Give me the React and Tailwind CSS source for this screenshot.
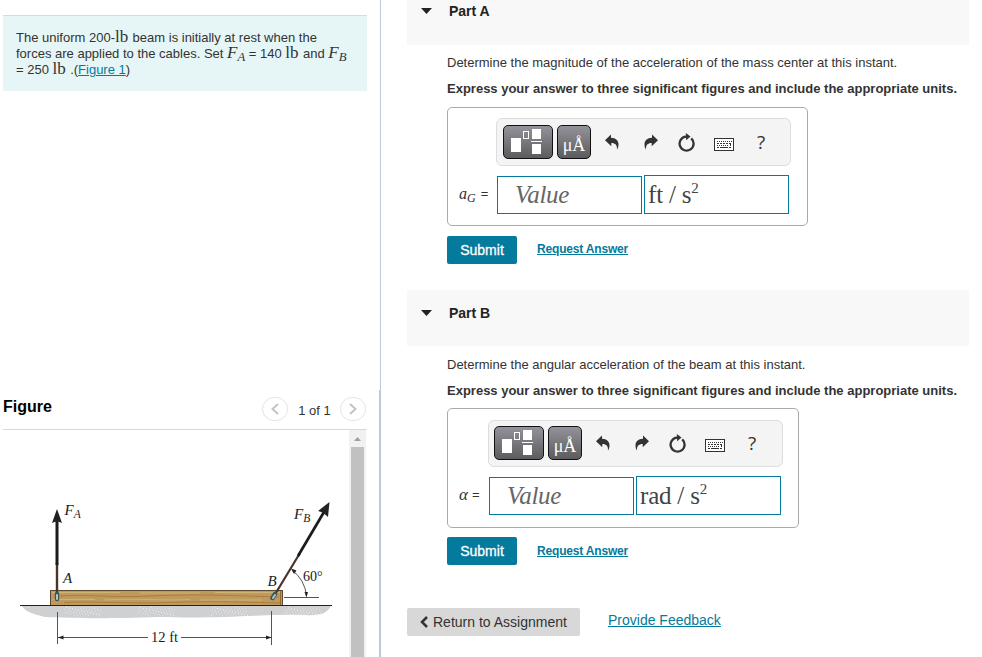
import { clsx } from 'clsx';

const SPECKS = Array.from({ length: 150 }, (_, i) => ({
  x: 28 + ((i * 73) % 293),
  y: 607 + ((i * 31) % 47) / 6,
}));

const GRAIN = [
  'M52 592.5H120M140 593H200M215 592.5H280',
  'M60 596C90 594 110 598 150 596S220 595 279 597',
  'M53 599.5H95M104 600C140 598 160 601 190 599.5M200 600H262',
  'M64 602.5C100 601 130 604 170 602.5S240 602 280 603',
];

function MathVar({ base, sub, className = '' }) {
  return (
    <span className={clsx('inline-block whitespace-nowrap font-["Liberation_Serif",serif] leading-none italic', className)}>
      {base}
      {sub && <span className="relative top-[3px] text-[0.75em]">{sub}</span>}
    </span>
  );
}

function Lb() {
  return <span className="inline-block w-[14px] font-['Liberation_Serif',serif] text-[17px] leading-none">lb</span>;
}

function UndoIcon({ flip }) {
  return (
    <svg viewBox="0 0 14 16" className={clsx('h-4 w-[14px]', flip && '-scale-x-100')} fill="#333">
      <path d="M0 6.2 6 .5V3.8C11 4 13.5 6.5 13.5 10.5 13.5 12.5 12.9 14.2 12 15.5 12.2 11 10.5 9.1 6.3 9V12.2Z" />
    </svg>
  );
}

function ResetIcon() {
  return (
    <svg viewBox="0 0 17 19" className="h-[19px] w-[17px]">
      <path d="M13.2 5.3A7 7 0 1 1 8 3.6" fill="none" stroke="#333" strokeWidth="2.3" />
      <path d="M7.8 0 12.5 3.6 8.2 7.2Z" fill="#333" />
    </svg>
  );
}

function KeyboardIcon() {
  return (
    <svg viewBox="0 0 20 13" className="h-[13px] w-5" shapeRendering="crispEdges">
      <rect x=".5" y=".5" width="19" height="12" rx="1" fill="#fff" stroke="#333" />
      <path d="M3 3.5H18" stroke="#333" strokeDasharray="1 1" />
      <path d="M3 5.5H16" stroke="#333" strokeDasharray="2 1" />
      <path d="M3 7.5H15" stroke="#333" strokeDasharray="1 1" />
      <path d="M3 9.5H5M6 9.5H14M15 9.5H17M16.5 5V8" stroke="#333" />
    </svg>
  );
}

function Toolbar({ className }) {
  const button = 'flex h-[34px] items-center justify-center rounded-[5px] border border-[#111] bg-linear-to-b from-[#94939b] to-[#5c5c5e]';
  return (
    <div className={clsx('flex w-[295px] rounded-[6px] border border-[#ddd] bg-[#f4f4f4]', className)}>
      <button className={clsx(button, 'w-[50px]')}>
        <svg viewBox="0 0 48 32" className="h-8 w-12" shapeRendering="crispEdges">
          <path d="M7 12H17V26H7ZM28 3H37V13H28ZM28 18H37V28H28ZM27 15H38V16H27Z" fill="#fff" />
          <rect x="19.5" y="5.5" width="5" height="7" fill="none" stroke="#fff" />
        </svg>
      </button>
      <button className={clsx(button, 'ml-1 w-[34px] pt-[6px] font-["Liberation_Serif",serif] text-[18px] leading-none text-white')}>
        μÅ
      </button>
      <div className="ml-[14px] pt-[9px]"><UndoIcon /></div>
      <div className="ml-[25px] pt-[9px]"><UndoIcon flip /></div>
      <div className="ml-[20px] pt-[8px]"><ResetIcon /></div>
      <div className="ml-[19px] pt-[13px]"><KeyboardIcon /></div>
      <span className="ml-[23px] pt-[7px] font-['Open_Sans',sans-serif] text-[19px] leading-[20px] text-[#333]">?</span>
    </div>
  );
}

function AnswerBox({ label, unit, second }) {
  return (
    <div className={clsx('rounded-[5px] border border-[#aaa]', second ? 'h-[120px] w-[352px] pt-[11px]' : 'h-[119px] w-[361px] pt-[10px]')}>
      <Toolbar className={second ? 'ml-[40px] h-[47px] pt-[5px] pl-[5px]' : 'ml-[48px] h-[48px] pt-[6px] pl-[6px]'} />
      <div className="mt-[9px] flex items-end">
        <div className={clsx('flex h-[39px] shrink-0 items-center pb-[2px] pl-[11px] text-[13px] text-[#333]', second ? 'w-[41px]' : 'w-[49px]')}>
          {label}
        </div>
        <div className="h-[38px] w-[145px] border border-[#047a9c] pl-[17px] font-['Liberation_Serif',serif] text-[25px] leading-[36px] tracking-[-0.3px] text-[#666] italic">
          Value
        </div>
        <div className="ml-[2px] h-[39px] w-[145px] border border-[#047a9c] pl-[3px] font-['Liberation_Serif',serif] text-[25px] leading-[37px] tracking-[-0.2px] whitespace-pre text-[#444]">
          {unit}<span className="relative -top-[10px] text-[15px] leading-none">2</span>
        </div>
      </div>
    </div>
  );
}

function PartHeader({ title, className }) {
  return (
    <div className={clsx('flex bg-[#f8f8f8] pl-[14px]', className)}>
      <svg viewBox="0 0 11 6" className="mt-[8px] h-[6px] w-[11px]"><path d="M0 0H11L5.5 6Z" fill="#222" /></svg>
      <h2 className="ml-[17px] text-[14px] leading-[22px] font-bold text-[#222]">{title}</h2>
    </div>
  );
}

function Actions({ linkClass }) {
  return (
    <div className="flex items-center">
      <button className="h-7 w-[70px] rounded-[2px] bg-[#047a9c] text-[14px] font-medium text-white [-webkit-text-stroke:0.3px_white]">
        Submit
      </button>
      <a className={clsx('ml-5 text-[12px] leading-4 font-bold tracking-[-0.18px] text-[#047a9c] underline', linkClass)}>Request Answer</a>
    </div>
  );
}

function BeamFigure() {
  return (
    <svg viewBox="3 430 346 227" className="h-[227px] w-[346px]" fontFamily="Liberation Serif, serif" fill="#222">
      <path d="M22 606H331C327 613 321 616 306 615 260 614 220 619 160 617 100 619 70 618 45 617 32 614 25 611 22 606Z" fill="#cfd0d2" />
      {SPECKS.map((s, i) => (
        <rect key={i} x={s.x} y={s.y} width="1" height="1" fill={i % 3 ? '#e4e5e6' : '#f5f5f5'} />
      ))}
      <rect x="50.5" y="590.5" width="232" height="15" fill="#bf9a5c" stroke="#5b4a30" />
      {GRAIN.map((d, i) => (
        <path key={i} d={d} fill="none" stroke={i % 2 ? '#a5803f' : '#d2b176'} strokeWidth="1" />
      ))}
      <path d="M280.5 591V605" stroke="#8f6b36" />
      <path d="M20 605.5H332" stroke="#222" strokeWidth="1.2" />

      {/* cable forces */}
      <path d="M57 563V597" stroke="#4a3329" strokeWidth="2.4" />
      <path d="M57 520V565" stroke="#1c1a1a" strokeWidth="3" />
      <path d="M57 509 62 523Q57 520 52 523Z" />
      <path d="M274 596 300 553" stroke="#4a3329" strokeWidth="2.2" />
      <path d="M298 556 324 512" stroke="#1c1a1a" strokeWidth="2.7" />
      <path d="M329.5 502 328 517Q323 512 318 511Z" />
      <path d="M57 594V599M275 594 272.5 598" stroke="#40555a" strokeWidth="4.5" strokeLinecap="round" />
      <path d="M57 595V599M275 595 273 598" stroke="#a9cbd0" strokeWidth="2" strokeLinecap="round" />

      {/* angle and span dimensions */}
      <path d="M284 597.5H319M292 570Q305 580 306.5 596M57.5 612V644M271.5 611V645M58 637.5H148M181 637.5H271" fill="none" stroke="#555" />
      <path d="M291 568.5 296.5 570.5 294 574ZM306.5 597.5 304.5 592H308ZM58 637.5 63.5 635.5V639.5ZM271.5 637.5 266 635.5V639.5Z" />
      <text x="64.5" y="514.5" fontSize="15" fontStyle="italic">F<tspan dy="3" fontSize="11.5">A</tspan></text>
      <text x="294" y="518.5" fontSize="15" fontStyle="italic">F<tspan dy="3" fontSize="11.5">B</tspan></text>
      <text x="63" y="583" fontSize="15" fontStyle="italic">A</text>
      <text x="267.5" y="585.5" fontSize="15" fontStyle="italic">B</text>
      <text x="303" y="581" fontSize="14">60°</text>
      <text x="151" y="641.5" fontSize="14.5">12 ft</text>
    </svg>
  );
}

function Pager({ next }) {
  return (
    <button className="flex h-6 w-[26px] items-center justify-center rounded-full border border-[#e4e4e4]">
      <svg viewBox="0 0 8 12" className="h-3 w-2">
        <path d={next ? 'M1 1 6.5 6 1 11' : 'M7 1 1.5 6 7 11'} fill="none" stroke="#c4c4c4" strokeWidth="2" />
      </svg>
    </button>
  );
}

export default function App() {
  return (
    <div className="flex h-[657px] w-[982px] overflow-hidden bg-white font-['Liberation_Sans',Arial,sans-serif] text-[#333]">
      <aside className="flex w-[381px] flex-col">
        <div className="flex h-[390px] flex-col border-r border-[#b9cbdc] pt-[15px] pl-[3px]">
          <div className="h-[76px] w-[364px] border-t border-[#d5dcdc] bg-[#e6f6f6] pt-[12px] pl-[13px] text-[13px] whitespace-nowrap">
            <p className="h-4 leading-4">The uniform 200-<Lb /> beam is initially at rest when the</p>
            <p className="h-4 leading-4">forces are applied to the cables. Set <MathVar base="F" sub="A" className="text-[17px]" /> = 140 <Lb /> and <MathVar base="F" sub="B" className="text-[17px]" /></p>
            <p className="h-4 leading-4">= 250 <Lb /> .(<a className="text-[#047a9c] underline">Figure 1</a>)</p>
          </div>
        </div>
        <div className="flex h-[267px] flex-col border-r-2 border-[#b9cbdc] pl-[3px]">
          <div className="flex h-10 w-[364px] border-b border-[#d9d9d9]">
            <h2 className="pt-[7px] text-[16px] leading-5 font-bold text-black">Figure</h2>
            <div className="mr-px ml-auto flex items-center pb-[2px]">
              <Pager />
              <span className="w-[52px] pt-[4px] pl-px text-center text-[13px]">1 of 1</span>
              <Pager next />
            </div>
          </div>
          <div className="flex">
            <BeamFigure />
            <div className="flex h-[227px] w-[17px] flex-col items-center bg-[#f1f1f1]">
              <svg viewBox="0 0 7 4" className="mt-[7px] h-1 w-[7px]"><path d="M0 4H7L3.5 0Z" fill="#a0a0a0" /></svg>
              <div className="mt-[6px] w-[13px] flex-1 bg-[#c1c1c1]" />
            </div>
          </div>
        </div>
      </aside>

      <main className="w-[601px] pl-[26px]">
        <section>
          <PartHeader title="Part A" className="h-[45px] w-[562px]" />
          <div className="pt-[10px] pl-10">
            <p className="text-[13px] leading-4 whitespace-nowrap">Determine the magnitude of the acceleration of the mass center at this instant.</p>
            <p className="mt-[10px] mb-[10px] text-[13px] leading-4 font-bold whitespace-nowrap">Express your answer to three significant figures and include the appropriate units.</p>
            <AnswerBox label={<><MathVar base="a" sub="G" className="text-[16px]" /><span className="ml-[5px]">=</span></>} unit="ft / s" />
            <div className="mt-[10px]"><Actions linkClass="pb-[2px]" /></div>
          </div>
        </section>
        <section className="mt-[26px]">
          <PartHeader title="Part B" className="h-[56px] w-[562px] pt-[12px]" />
          <div className="pt-[11px] pl-10">
            <p className="text-[13px] leading-4 whitespace-nowrap">Determine the angular acceleration of the beam at this instant.</p>
            <p className="mt-[10px] mb-[9px] text-[13px] leading-4 font-bold whitespace-nowrap">Express your answer to three significant figures and include the appropriate units.</p>
            <AnswerBox second label={<><MathVar base="α" className="text-[17px]" /><span className="ml-[4px]">=</span></>} unit="rad / s" />
            <div className="mt-[9px]"><Actions /></div>
          </div>
        </section>
        <footer className="mt-[43px] flex">
          <button className="flex h-7 w-[173px] items-center rounded-[2px] bg-[#d8d8d8] pl-[13px] text-[14px] whitespace-nowrap">
            <svg viewBox="0 0 8 12" className="mr-[5px] h-3 w-2"><path d="M7 1 2 6 7 11" fill="none" stroke="#333" strokeWidth="2.5" /></svg>
            Return to Assignment
          </button>
          <a className="ml-7 pt-[2px] text-[14px] leading-5 text-[#047a9c] underline">Provide Feedback</a>
        </footer>
      </main>
    </div>
  );
}
